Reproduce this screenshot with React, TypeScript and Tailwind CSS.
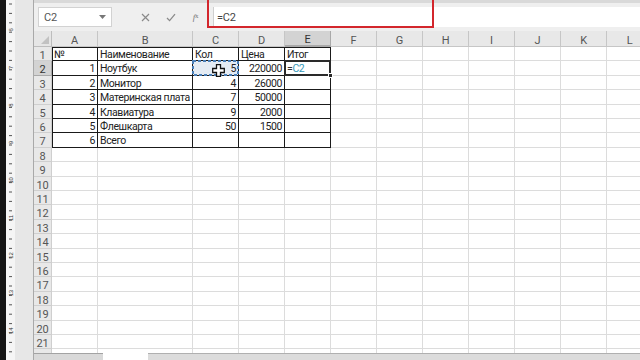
import React from "react";

type Col = { key: string; w: number };

const cols: Col[] = [
  { key: "A", w: 46 },
  { key: "B", w: 95 },
  { key: "C", w: 46 },
  { key: "D", w: 46 },
  { key: "E", w: 46 },
  { key: "F", w: 46 },
  { key: "G", w: 46 },
  { key: "H", w: 46 },
  { key: "I", w: 46 },
  { key: "J", w: 46 },
  { key: "K", w: 46 },
  { key: "L", w: 46 },
];

const data: string[][] = [
  ["№", "Наименование", "Кол", "Цена", "Итог"],
  ["1", "Ноутбук", "5", "220000", ""],
  ["2", "Монитор", "4", "26000", ""],
  ["3", "Материнская плата", "7", "50000", ""],
  ["4", "Клавиатура", "9", "2000", ""],
  ["5", "Флешкарта", "50", "1500", ""],
  ["6", "Всего", "", "", ""],
];

const ROWS = 22;
const rowTop = (i: number) => Math.round(47 + i * 14.4);

function Ruler() {
  const ticks = Array.from({ length: 38 }, (_, i) => 4 + i * 9.4);
  const labels = Array.from({ length: 9 }, (_, i) => ({ y: 30 + i * 37.6, n: i + 6 }));
  return (
    <div className="w-[9px] h-full shrink-0 bg-[#f5f5f5]">
      <svg width="9" height="360" viewBox="0 0 9 360">
        {ticks.map((y, i) => (
          <line key={i} x1="3" x2="6" y1={y} y2={y} stroke="#444" strokeWidth="0.9" />
        ))}
        {labels.map((l) => (
          <text
            key={l.n}
            x="0"
            y="0"
            fontSize="6"
            fill="#333"
            fontFamily="Liberation Sans, Arial, sans-serif"
            transform={`translate(7 ${l.y}) rotate(-90)`}
            textAnchor="middle"
          >
            {l.n}
          </text>
        ))}
      </svg>
    </div>
  );
}

function FormulaBar() {
  return (
    <div className="relative h-[31px] shrink-0 bg-[#efefef] border-t-[3px] border-[#d9d9d9] flex items-center">
      <div className="ml-[4px] w-[74px] h-[20px] shrink-0 bg-white border border-[#d2d2d2] flex items-center justify-between pl-[5px] pr-[5px] text-[#555]">
        <span>C2</span>
        <svg width="7" height="4" viewBox="0 0 7 4">
          <path d="M0 0h7L3.5 4z" fill="#777" />
        </svg>
      </div>
      <div className="w-[21px] shrink-0" />
      <div className="w-[25px] shrink-0 flex justify-center">
        <svg width="9" height="9" viewBox="0 0 9 9">
          <path d="M1 1l7 7M8 1L1 8" stroke="#8a8a8a" strokeWidth="1.2" />
        </svg>
      </div>
      <div className="w-[25px] shrink-0 flex justify-center">
        <svg width="10" height="9" viewBox="0 0 10 9">
          <path d="M1 5l2.6 2.6L9 1.2" stroke="#8a8a8a" strokeWidth="1.3" fill="none" />
        </svg>
      </div>
      <div className="w-[25px] shrink-0 flex justify-center text-[9px] italic text-[#777] font-['Liberation_Serif',serif]">
        f<span className="text-[7px] not-italic">x</span>
      </div>
      <div className="w-[5px] shrink-0" />
      <div className="flex-1 h-[20px] bg-white border-l border-[#cfcfcf] flex items-center pl-[3px] text-[#444]">
        =C2
      </div>
      <div className="absolute left-[173px] top-[-6px] w-[227px] h-[31px] border-2 border-[#d3262c]" />
    </div>
  );
}

function HeaderRow() {
  return (
    <div className="flex h-[16px] shrink-0">
      <div className="relative w-[18px] shrink-0 bg-[#e6e6e6] border-r border-b border-[#bdbdbd]">
        <svg className="absolute right-[2px] bottom-[2px]" width="8" height="8" viewBox="0 0 8 8">
          <path d="M8 0v8H0z" fill="#c2c2c2" />
        </svg>
      </div>
      {cols.map((c) =>
        c.key === "E" ? (
          <div
            key={c.key}
            style={{ width: c.w }}
            className="shrink-0 flex items-center justify-center pt-[3px] bg-[#d3d3d3] border-r border-b-2 border-[#a9a9a9] text-[#333]"
          >
            <span>{c.key}</span>
          </div>
        ) : (
          <div
            key={c.key}
            style={{ width: c.w }}
            className="shrink-0 flex items-center justify-center pt-[3px] bg-[#e8e8e8] border-r border-b border-[#c6c6c6] text-[#555]"
          >
            <span>{c.key}</span>
          </div>
        )
      )}
    </div>
  );
}

function DataCell({ r, c, w }: { r: number; c: number; w: number }) {
  const inTable = r <= 7 && c <= 4;
  const text = inTable ? data[r - 1][c] : "";
  const right = r > 1 && (c === 0 || c === 2 || c === 3);
  let edge = "";
  if (inTable && c === 0 && r === 1) edge = "shadow-[inset_1px_1px_0_#1a1a1a]";
  else if (inTable && c === 0) edge = "shadow-[inset_1px_0_0_#1a1a1a]";
  else if (inTable && r === 1) edge = "shadow-[inset_0_1px_0_#1a1a1a]";

  const isC2 = r === 2 && c === 2;
  const isE2 = r === 2 && c === 4;

  return (
    <div
      style={{ width: w }}
      className={`relative shrink-0 flex items-center pt-[3px] px-[2px] whitespace-nowrap text-[10.5px] tracking-[-0.4px] border-r border-b ${
        inTable ? "border-[#1a1a1a]" : "border-[#dcdcdc]"
      } ${right ? "justify-end" : "justify-start"} ${edge} ${isC2 ? "bg-[#e4ebf3] z-10" : ""} ${
        isE2 ? "z-10" : ""
      }`}
    >
      {isE2 ? (
        <span>
          <span className="text-[#333]">=</span>
          <span className="text-[#3597b8]">C2</span>
        </span>
      ) : (
        <span className="text-[#222]">{text}</span>
      )}
      {isC2 && (
        <>
          <svg className="absolute left-[-1px] top-[-1px]" width={w + 1} height="16" viewBox={`0 0 ${w + 1} 16`}>
            <rect
              x="1"
              y="1"
              width={w - 1}
              height="14"
              fill="none"
              stroke="#4a7fb8"
              strokeWidth="2"
              strokeDasharray="3 2"
            />
          </svg>
          <svg className="absolute left-[19px] top-[3px]" width="13" height="13" viewBox="0 0 13 13">
            <path
              d="M4.5 0.7h4v3.8h3.8v4H8.5v3.8h-4V8.5H0.7v-4h3.8z"
              fill="#fff"
              stroke="#111"
              strokeWidth="1.3"
            />
          </svg>
        </>
      )}
      {isE2 && (
        <>
          <div className="absolute inset-[-1px] border-2 border-[#2a2a2a]" />
          <div className="absolute right-[-3px] bottom-[-3px] w-[5px] h-[5px] bg-[#2a2a2a] border border-white" />
        </>
      )}
    </div>
  );
}

function Sheet() {
  return (
    <div className="flex-1 min-h-0 overflow-hidden flex flex-col bg-white">
      <HeaderRow />
      {Array.from({ length: ROWS }, (_, i) => {
        const r = i + 1;
        const h = rowTop(r) - rowTop(r - 1);
        const sel = r === 2;
        return (
          <div key={r} style={{ height: h }} className="flex shrink-0">
            <div
              className={`w-[18px] shrink-0 flex items-start justify-center pt-[3px] border-r border-b ${
                sel ? "bg-[#d3d3d3] border-[#a9a9a9] text-[#333]" : "bg-[#e8e8e8] border-[#cfcfcf] text-[#555]"
              }`}
            >
              <span>{r}</span>
            </div>
            {cols.map((c, ci) => (
              <DataCell key={c.key} r={r} c={ci} w={c.w} />
            ))}
          </div>
        );
      })}
    </div>
  );
}

function BottomBar() {
  return (
    <div className="h-[7px] shrink-0 flex">
      <div className="w-[69px] bg-[#d9d9d9] border-t border-[#a3a3a3]" />
      <div className="w-[45px] bg-white" />
      <div className="flex-1 bg-[#dcdcdc] border-t border-[#b0b0b0]" />
    </div>
  );
}

export default function App() {
  return (
    <div className="w-[640px] h-[360px] overflow-hidden flex bg-white text-[11px] leading-none tracking-[-0.2px] font-['Roboto','Liberation_Sans',Arial,sans-serif]">
      <div className="w-[6px] h-full shrink-0 bg-[#141414]" />
      <Ruler />
      <div className="w-[18px] h-full shrink-0 bg-[#e7e7e7]" />
      <div className="flex-1 min-w-0 flex flex-col border-l border-[#a9a9a9]">
        <FormulaBar />
        <Sheet />
        <BottomBar />
      </div>
    </div>
  );
}
